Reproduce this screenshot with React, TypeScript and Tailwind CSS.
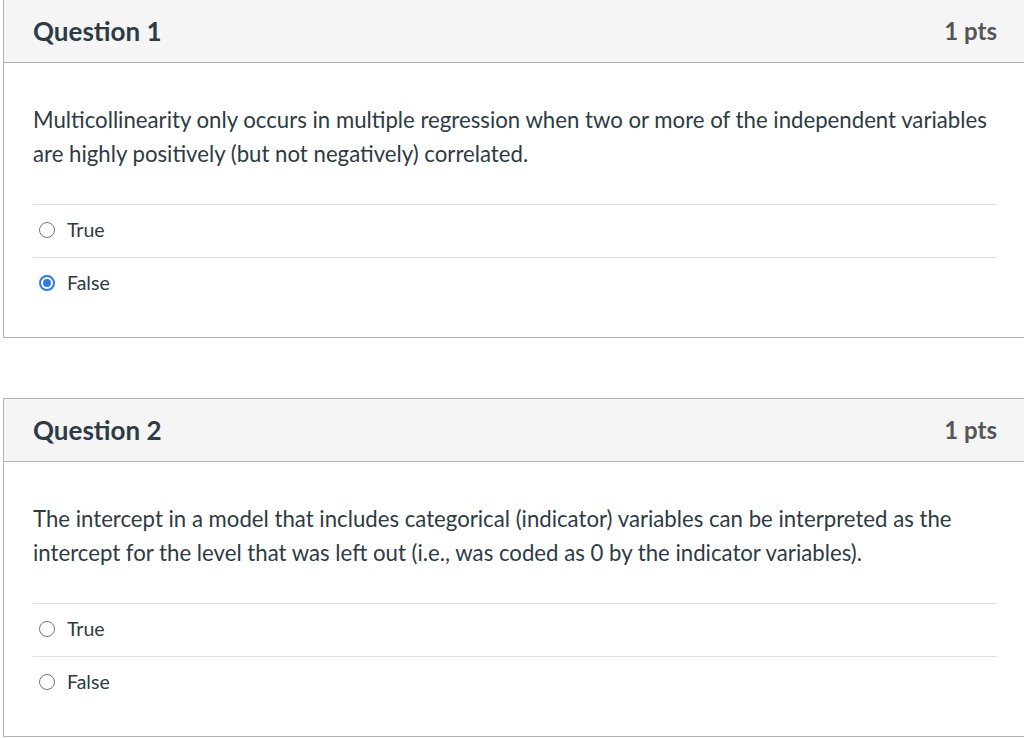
import React from 'react'

type Question = {
  title: string
  points: string
  text: string
  answers: { label: string; checked: boolean }[]
}

const questions: Question[] = [
  {
    title: 'Question 1',
    points: '1 pts',
    text: 'Multicollinearity only occurs in multiple regression when two or more of the independent variables are highly positively (but not negatively) correlated.',
    answers: [
      { label: 'True', checked: false },
      { label: 'False', checked: true },
    ],
  },
  {
    title: 'Question 2',
    points: '1 pts',
    text: 'The intercept in a model that includes categorical (indicator) variables can be interpreted as the intercept for the level that was left out (i.e., was coded as 0 by the indicator variables).',
    answers: [
      { label: 'True', checked: false },
      { label: 'False', checked: false },
    ],
  },
]

function Radio({ checked }: { checked: boolean }) {
  if (checked) {
    return (
      <span className="flex h-4 w-4 items-center justify-center rounded-full border-2 border-[#2b7be9] bg-white">
        <span className="h-[8px] w-[8px] rounded-full bg-[#2b7be9]" />
      </span>
    )
  }
  return <span className="block h-4 w-4 rounded-full border border-[#767676] bg-white" />
}

function QuestionCard({ q, first }: { q: Question; first: boolean }) {
  return (
    <div className={`w-[1024px] border border-[#b4b4b4] bg-white ${first ? '-mt-px' : 'mt-[60px]'}`}>
      <div className="flex h-[63px] items-center justify-between border-b border-[#b4b4b4] bg-[#f5f5f5] px-[29px]">
        <h2 className="text-[26px] font-bold text-[#2d3b45]">{q.title}</h2>
        <span className="text-[24px] font-bold text-[#565656]">{q.points}</span>
      </div>
      <div className="px-[29px] pt-[40px] pb-[27px]">
        <p className="text-[22.2px] leading-[34px] text-[#2d3b45]">{q.text}</p>
        <div className="mt-[33px]">
          {q.answers.map((a) => (
            <label
              key={a.label}
              className="flex h-[53px] items-center gap-3 border-t border-[#dedede] pl-[6px] pb-[2px]"
            >
              <Radio checked={a.checked} />
              <span className="text-[19.5px] text-[#2d3b45]">{a.label}</span>
            </label>
          ))}
        </div>
      </div>
    </div>
  )
}

export default function App() {
  return (
    <div className="h-[738px] w-[1024px] overflow-hidden bg-white pl-[3px] font-['Lato',sans-serif]">
      {questions.map((q, i) => (
        <QuestionCard key={q.title} q={q} first={i === 0} />
      ))}
    </div>
  )
}
